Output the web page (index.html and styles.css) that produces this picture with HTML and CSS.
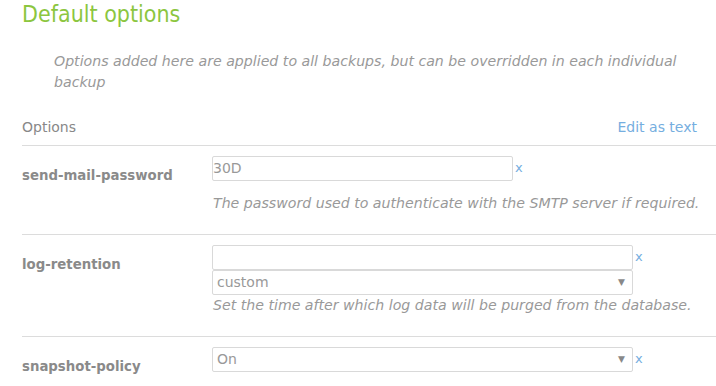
FILE: index.html
```html
<!DOCTYPE html>
<html>
<head>
<meta charset="utf-8">
<link rel="stylesheet" href="styles.css">
</head>
<body>
<div class="page">
  <h1 class="title">Default options</h1>
  <p class="intro">Options added here are applied to all backups, but can be overridden in each individual backup</p>
  <div class="options-head">
    <span class="options-label">Options</span>
    <a class="link edit-link">Edit as text</a>
  </div>
  <div class="row">
    <div class="label">send-mail-password</div>
    <div class="field">
      <div class="control-line gap-below">
        <div class="input short">30D</div><a class="link remove">x</a>
      </div>
      <div class="help">The password used to authenticate with the SMTP server if required.</div>
    </div>
  </div>
  <div class="row">
    <div class="label">log-retention</div>
    <div class="field">
      <div class="control-line">
        <div class="input wide"></div><a class="link remove">x</a>
      </div>
      <div class="select wide"><span>custom</span><span class="arrow">▼</span></div>
      <div class="help">Set the time after which log data will be purged from the database.</div>
    </div>
  </div>
  <div class="row last">
    <div class="label">snapshot-policy</div>
    <div class="field">
      <div class="control-line">
        <div class="select wide"><span>On</span><span class="arrow">▼</span></div><a class="link remove">x</a>
      </div>
    </div>
  </div>
</div>
</body>
</html>
```
FILE: styles.css
```css
html, body {
  margin: 0;
  padding: 0;
  background: #ffffff;
}
body {
  font-family: "DejaVu Sans", Verdana, sans-serif;
  color: #888;
  overflow: hidden;
}
.page {
  padding-left: 22px;
}
.title {
  margin: 0;
  font-family: "DejaVu Sans Condensed", "DejaVu Sans", sans-serif;
  font-stretch: condensed;
  font-size: 23px;
  font-weight: normal;
  line-height: 29px;
  color: #8cc63f;
}
.intro {
  margin: 22px 30px 0 32px;
  font-size: 14.15px;
  line-height: 21px;
  font-style: italic;
  color: #999;
}
.options-head {
  display: flex;
  justify-content: space-between;
  align-items: center;
  margin-top: 21px;
  padding-right: 19px;
  height: 26px;
  padding-bottom: 5px;
  font-size: 14px;
}
.options-label {
  color: #888;
}
.link {
  color: #75aee0;
}
.row {
  display: flex;
  border-top: 1px solid #dcdcdc;
  padding: 10px 0 20px 0;
}
.label {
  width: 190px;
  flex: none;
  padding-top: 13px;
  font-size: 13.3px;
  font-weight: bold;
  line-height: 14px;
  color: #8a8a8a;
}
.field {
  display: flex;
  flex-direction: column;
}
.control-line {
  display: flex;
  align-items: center;
}
.gap-below {
  margin-bottom: 12px;
}
.input, .select {
  box-sizing: border-box;
  height: 25px;
  border: 1px solid #d9d9d9;
  border-radius: 2px;
  background: #fff;
  font-size: 14px;
  line-height: 23px;
  padding: 0 6px 0 0;
  color: #999;
}
.select {
  display: flex;
  justify-content: space-between;
  align-items: center;
  padding-left: 4px;
}
.short { width: 301px; }
.wide { width: 421px; }
.arrow {
  font-size: 9px;
  color: #888;
  padding-right: 1px;
}
.remove {
  font-size: 13px;
  margin-left: 2px;
  margin-top: -2px;
}
.help {
  font-size: 14.15px;
  font-style: italic;
  line-height: 21px;
  color: #999;
  padding-left: 1px;
}
```
